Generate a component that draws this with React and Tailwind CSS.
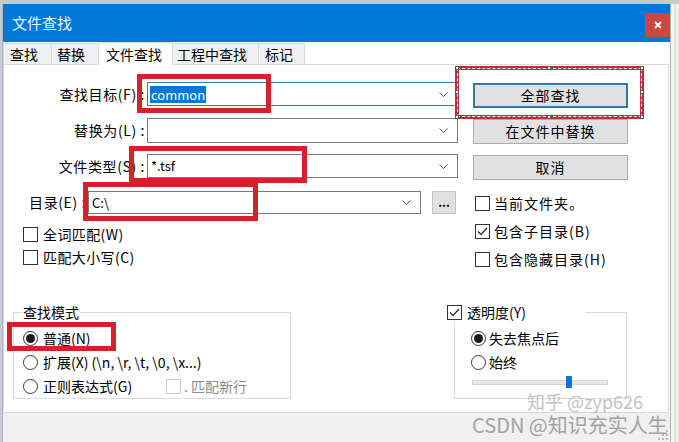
import React from 'react';

const FONT = "font-['Noto_Sans_CJK_SC','Noto_Sans',sans-serif]";

function Chevron() {
  return (
    <svg width="9" height="5" viewBox="0 0 9 5" className="shrink-0">
      <polyline points="0.5,0.5 4.5,4.5 8.5,0.5" fill="none" stroke="#555" strokeWidth="1" />
    </svg>
  );
}

function CheckBox({ checked, disabled }) {
  return (
    <div
      className={
        'w-[15px] h-[15px] shrink-0 border bg-white flex items-center justify-center ' +
        (disabled ? 'border-[#cccccc]' : 'border-[#333333]')
      }
    >
      {checked && (
        <svg width="11" height="9" viewBox="0 0 11 9">
          <polyline points="1,4.5 4,7.5 10,1" fill="none" stroke="#222" strokeWidth="1.2" />
        </svg>
      )}
    </div>
  );
}

function Radio({ checked }) {
  return (
    <div className="w-[15px] h-[15px] shrink-0 rounded-full border border-[#333333] bg-white flex items-center justify-center">
      {checked && <div className="w-[9px] h-[9px] rounded-full bg-[#1c1c1c]" />}
    </div>
  );
}

function Button({ children, isDefault }) {
  return (
    <div
      className={
        'h-[25px] w-[155px] flex items-center justify-center text-[14px] tracking-[1px] bg-[#e1e1e1] ' +
        (isDefault ? 'border-2 border-[#2f77ad]' : 'border border-[#adadad]')
      }
    >
      {children}
    </div>
  );
}

function Handle({ className }) {
  return <div className={'absolute w-[4px] h-[4px] bg-white border border-[#555] ' + className} />;
}

export default function App() {
  return (
    <div className={`relative w-[679px] h-[442px] overflow-hidden bg-[#e8ebe8] text-black ${FONT}`}>
      <div className="h-[4px] bg-[#c3cdc6]" />
      <div className="flex h-[438px]">
        <div className="w-[2px] bg-[#c4ced8]" />

        {/* dialog window */}
        <div className="w-[669px] flex flex-col bg-white border-l border-r border-[#aab4be]">
          {/* title bar */}
          <div className="h-[38px] shrink-0 bg-[#0078d7] flex items-start pl-[9px]">
            <span className="mt-[9px] text-[15px] leading-[20px] text-[#eef5fc]">文件查找</span>
            <div className="ml-auto mt-[9px] w-[25px] h-[24px] bg-[#c9483f] flex items-center justify-center">
              <svg width="8" height="8" viewBox="0 0 8 8">
                <path d="M1 1 L7 7 M7 1 L1 7" stroke="#fff" strokeWidth="1.8" />
              </svg>
            </div>
          </div>

          {/* tabs */}
          <div className="h-[22px] shrink-0 flex items-end text-[14px] leading-[20px]">
            <div className="w-[49px] h-[21px] pl-[6px] flex items-center bg-[#f0f0f0] border border-b-0 border-[#d9d9d9]">查找</div>
            <div className="w-[47px] h-[21px] pl-[5px] flex items-center bg-[#f0f0f0] border border-b-0 border-l-0 border-[#d9d9d9]">替换</div>
            <div className="relative z-10 -mb-px w-[74px] h-[23px] pl-[7px] flex items-center bg-white border border-b-0 border-l-0 border-[#d9d9d9]">文件查找</div>
            <div className="w-[86px] h-[21px] pl-[4px] flex items-center bg-[#f0f0f0] border border-b-0 border-l-0 border-[#d9d9d9]">工程中查找</div>
            <div className="w-[46px] h-[21px] pl-[6px] flex items-center bg-[#f0f0f0] border border-b-0 border-l-0 border-[#d9d9d9]">标记</div>
          </div>

          {/* tab panel */}
          <div className="h-[349px] shrink-0 mr-[1px] border border-[#d9d9d9] text-[14px]">
            <div className="h-[225px] pt-[17px] flex">
              {/* left form */}
              <div className="w-[454px] flex flex-col">
                <div className="flex items-center h-[24px]">
                  <div className="w-[143px] pr-[2px] text-right whitespace-nowrap tracking-[0.6px]">查找目标(F) :</div>
                  <div className="w-[311px] h-[24px] flex items-center border border-[#3b79ad] pl-[2px] pr-[9px]">
                    <span className="bg-[#0078d7] text-white text-[13px] leading-[17px] px-[1px]">common</span>
                    <span className="ml-auto"><Chevron /></span>
                  </div>
                </div>
                <div className="flex items-center h-[24px] mt-[12px]">
                  <div className="w-[143px] pr-[2px] text-right whitespace-nowrap tracking-[0.6px]">替换为(L) :</div>
                  <div className="w-[311px] h-[25px] flex items-center border border-[#7a7a7a] pl-[2px] pr-[9px]">
                    <span className="ml-auto"><Chevron /></span>
                  </div>
                </div>
                <div className="flex items-center h-[24px] mt-[12px]">
                  <div className="w-[143px] pr-[2px] text-right whitespace-nowrap tracking-[0.6px]">文件类型(S) :</div>
                  <div className="w-[311px] h-[24px] flex items-center border border-[#7a7a7a] pl-[3px] pr-[9px]">
                    <span className="text-[13px]">*.tsf</span>
                    <span className="ml-auto"><Chevron /></span>
                  </div>
                </div>
                <div className="flex items-center h-[23px] mt-[13px]">
                  <div className="w-[84px] pr-[2px] text-right whitespace-nowrap tracking-[0.6px]">目录(E) :</div>
                  <div className="w-[333px] h-[23px] flex items-center border border-[#7a7a7a] pl-[3px] pr-[9px]">
                    <span className="text-[13px]">C:\</span>
                    <span className="ml-auto"><Chevron /></span>
                  </div>
                  <div className="ml-[11px] w-[24px] h-[23px] flex items-center justify-center bg-[#e1e1e1] border border-[#c4c4c4] text-[12px] font-bold leading-none pb-[2px]">
                    ...
                  </div>
                </div>
                <div className="flex items-center h-[20px] mt-[10px] pl-[19px]">
                  <CheckBox />
                  <span className="ml-[5px] tracking-[0.4px]">全词匹配(W)</span>
                </div>
                <div className="flex items-center h-[20px] mt-[3px] pl-[19px]">
                  <CheckBox />
                  <span className="ml-[5px] tracking-[0.4px]">匹配大小写(C)</span>
                </div>
              </div>

              {/* right buttons */}
              <div className="ml-[15px] w-[155px] flex flex-col">
                <div className="mt-[1px]"><Button isDefault>全部查找</Button></div>
                <div className="mt-[11px]"><Button>在文件中替换</Button></div>
                <div className="mt-[11px]"><Button>取消</Button></div>
                <div className="flex items-center h-[20px] mt-[13px] pl-[2px]">
                  <CheckBox />
                  <span className="ml-[4px] tracking-[1px]">当前文件夹。</span>
                </div>
                <div className="flex items-center h-[20px] mt-[8px] pl-[2px]">
                  <CheckBox checked />
                  <span className="ml-[4px] tracking-[1px]">包含子目录(B)</span>
                </div>
                <div className="flex items-center h-[20px] mt-[8px] pl-[2px]">
                  <CheckBox />
                  <span className="ml-[4px] tracking-[1px]">包含隐藏目录(H)</span>
                </div>
              </div>
            </div>

            {/* group boxes */}
            <div className="flex items-start mt-[12px]">
              <fieldset className="ml-[9px] w-[278px] h-[97px] border border-[#dcdcdc]">
                <legend className="ml-[8px] px-[1px] leading-[20px]">查找模式</legend>
                <div className="flex flex-col pt-[5px] gap-[2px]">
                  <div className="h-[22px] flex items-center pl-[9px]">
                    <Radio checked />
                    <span className="ml-[5px]">普通(N)</span>
                  </div>
                  <div className="h-[22px] flex items-center pl-[9px]">
                    <Radio />
                    <span className="ml-[5px] whitespace-nowrap">扩展(X) (\n, \r, \t, \0, \x...)</span>
                  </div>
                  <div className="h-[22px] flex items-center pl-[9px]">
                    <Radio />
                    <span className="ml-[5px] w-[123px] whitespace-nowrap">正则表达式(G)</span>
                    <CheckBox disabled />
                    <span className="ml-[3px] text-[#8c8c8c] whitespace-nowrap">. 匹配新行</span>
                  </div>
                </div>
              </fieldset>

              <fieldset className="ml-[163px] w-[173px] h-[97px] border border-[#dcdcdc]">
                <legend className="-ml-[8px] w-[138px] h-[20px] flex items-center bg-white">
                  <CheckBox checked />
                  <span className="ml-[5px]">透明度(Y)</span>
                </legend>
                <div className="flex flex-col pt-[5px] gap-[2px]">
                  <div className="h-[22px] flex items-center pl-[16px]">
                    <Radio checked />
                    <span className="ml-[3px]">失去焦点后</span>
                  </div>
                  <div className="h-[22px] flex items-center pl-[16px]">
                    <Radio />
                    <span className="ml-[3px]">始终</span>
                  </div>
                  <div className="relative ml-[17px] mt-[1px] w-[136px] h-[12px]">
                    <div className="mt-[4px] h-[5px] bg-[#e7e7e7] border border-[#d6d6d6]" />
                    <div className="absolute left-[94px] top-0 w-[6px] h-[12px] bg-[#0078d7]" />
                  </div>
                </div>
              </fieldset>
            </div>
          </div>

          {/* footer */}
          <div className="flex-1 bg-[#f0f0f0] flex justify-end items-end pr-[1px] pb-[1px]">
            <svg width="11" height="11" viewBox="0 0 11 11">
              <rect x="8" y="0" width="2" height="2" fill="#b8b8b8" />
              <rect x="4" y="4" width="2" height="2" fill="#b8b8b8" />
              <rect x="8" y="4" width="2" height="2" fill="#b8b8b8" />
              <rect x="0" y="8" width="2" height="2" fill="#b8b8b8" />
              <rect x="4" y="8" width="2" height="2" fill="#b8b8b8" />
              <rect x="8" y="8" width="2" height="2" fill="#b8b8b8" />
            </svg>
          </div>
        </div>

        <div className="flex-1 flex">
          <div className="w-[3px] bg-[#f4f5f4]" />
          <div className="w-[2px] bg-[#d7e6d6]" />
          <div className="flex-1 bg-[#eef0ee]" />
        </div>
      </div>

      {/* red annotation boxes */}
      <div className="absolute left-[137px] top-[74px] w-[134px] h-[39px] border-[5px] border-[#d3222b]" />
      <div className="absolute left-[129px] top-[146px] w-[178px] h-[37px] border-[5px] border-[#d3222b]" />
      <div className="absolute left-[83px] top-[182px] w-[175px] h-[39px] border-[5px] border-[#d3222b]" />
      <div className="absolute left-[7px] top-[322px] w-[109px] h-[29px] border-[5px] border-[#d3222b]" />

      {/* selection frame round the default button */}
      <div className="absolute left-[455px] top-[66px] w-[189px] h-[53px]">
        <div className="absolute inset-0 border-[4px] border-[#b8313e]" />
        <div className="absolute inset-[2px] border border-dashed border-white" />
        <Handle className="left-0 top-0" />
        <Handle className="left-[92px] top-0" />
        <Handle className="right-0 top-0" />
        <Handle className="left-0 top-[24px]" />
        <Handle className="right-0 top-[24px]" />
        <Handle className="left-0 bottom-0" />
        <Handle className="left-[92px] bottom-0" />
        <Handle className="right-0 bottom-0" />
      </div>

      {/* watermarks */}
      <div className="absolute left-[527px] top-[391px] text-[18px] leading-[20px] text-[#b4b4b4] opacity-80 whitespace-nowrap">
        知乎 @zyp626
      </div>
      <div className="absolute left-[472px] top-[414px] text-[20px] leading-[22px] text-[#a3a3a3] whitespace-nowrap">
        CSDN @知识充实人生
      </div>
    </div>
  );
}
